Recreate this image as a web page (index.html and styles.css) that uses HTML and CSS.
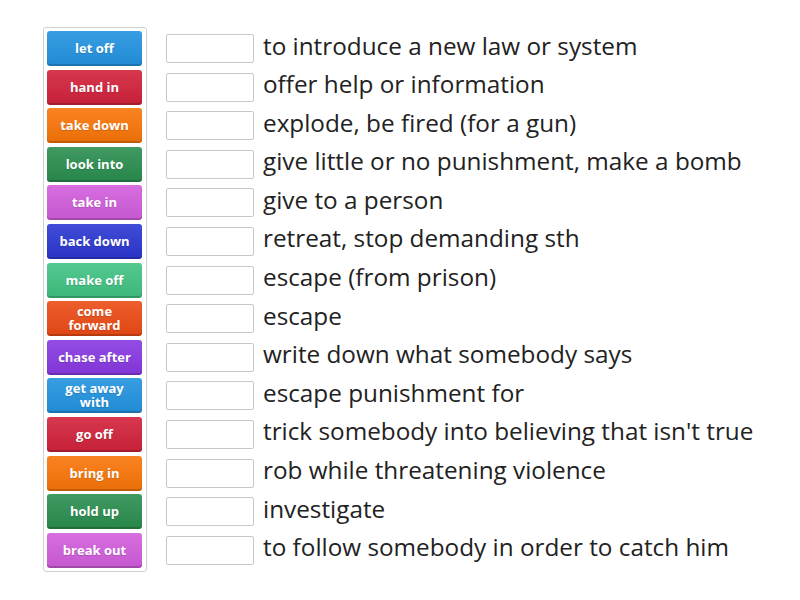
FILE: index.html
```html
<!DOCTYPE html>
<html lang="en">
<head>
    <meta charset="UTF-8">
    <meta name="viewport" content="width=device-width, initial-scale=1.0">
    <title>Match up - phrasal verbs</title>
    <link rel="stylesheet" href="styles.css">
</head>
<body>
    <div id="match-up">
        <div id="tiles">
            <div class="tile blue">let off</div>
            <div class="tile red">hand in</div>
            <div class="tile orange">take down</div>
            <div class="tile green">look into</div>
            <div class="tile pink">take in</div>
            <div class="tile navy">back down</div>
            <div class="tile teal">make off</div>
            <div class="tile flame">come<br>forward</div>
            <div class="tile purple">chase after</div>
            <div class="tile blue">get away<br>with</div>
            <div class="tile red">go off</div>
            <div class="tile orange">bring in</div>
            <div class="tile green">hold up</div>
            <div class="tile pink">break out</div>
        </div>

        <div id="clues">
            <div class="clue"><div class="drop"></div><span>to introduce a new law or system</span></div>
            <div class="clue"><div class="drop"></div><span>offer help or information</span></div>
            <div class="clue"><div class="drop"></div><span>explode, be fired (for a gun)</span></div>
            <div class="clue"><div class="drop"></div><span>give little or no punishment, make a bomb</span></div>
            <div class="clue"><div class="drop"></div><span>give to a person</span></div>
            <div class="clue"><div class="drop"></div><span>retreat, stop demanding sth</span></div>
            <div class="clue"><div class="drop"></div><span>escape (from prison)</span></div>
            <div class="clue"><div class="drop"></div><span>escape</span></div>
            <div class="clue"><div class="drop"></div><span>write down what somebody says</span></div>
            <div class="clue"><div class="drop"></div><span>escape punishment for</span></div>
            <div class="clue"><div class="drop"></div><span>trick somebody into believing that isn't true</span></div>
            <div class="clue"><div class="drop"></div><span>rob while threatening violence</span></div>
            <div class="clue"><div class="drop"></div><span>investigate</span></div>
            <div class="clue"><div class="drop"></div><span>to follow somebody in order to catch him</span></div>
        </div>
    </div>
</body>
</html>
```

FILE: styles.css
```css
body {
    margin: 0;
    background-color: #fff;
    font-family: "Open Sans", Arial, sans-serif;
    color: #222;
}
#match-up {
    display: flex;
    flex-direction: row;
    align-items: flex-start;
    padding: 27px 0 0 43px;
    gap: 19px;
}
#tiles {
    display: flex;
    flex-direction: column;
    gap: 3.6px;
    padding: 3px 4px 3px 3px;
    border: 1px solid #d0d0d0;
    border-radius: 3px;
}
.tile {
    width: 95px;
    height: 35px;
    box-sizing: border-box;
    display: flex;
    align-items: center;
    justify-content: center;
    text-align: center;
    color: #fff;
    font-weight: bold;
    font-size: 13px;
    line-height: 14px;
    border-radius: 3px;
    background-image: linear-gradient(rgba(255, 255, 255, 0.1), rgba(0, 0, 0, 0.06));
    box-shadow: inset 0 -2px 0 rgba(0, 0, 0, 0.18);
    text-shadow: 0 1px 1px rgba(0, 0, 0, 0.15);
    padding-bottom: 1px;
}
.blue { background-color: #2293e0; }
.red { background-color: #d2223b; }
.orange { background-color: #f97508; }
.green { background-color: #2a8e4f; }
.pink { background-color: #d25ddc; }
.navy { background-color: #2b37d2; }
.teal { background-color: #40c283; }
.flame { background-color: #ec4b15; }
.purple { background-color: #8838e2; }
#clues {
    display: flex;
    flex-direction: column;
    gap: 3.6px;
    padding-top: 4px;
}
.clue {
    height: 35px;
    display: flex;
    align-items: center;
    gap: 9px;
}
.drop {
    flex-shrink: 0;
    width: 88px;
    height: 29px;
    box-sizing: border-box;
    border: 1px solid #c8c8c8;
    border-radius: 2px;
    background: #fff;
}
.clue span {
    font-size: 24.3px;
    line-height: 30px;
    padding-bottom: 6px;
    white-space: nowrap;
}
```
